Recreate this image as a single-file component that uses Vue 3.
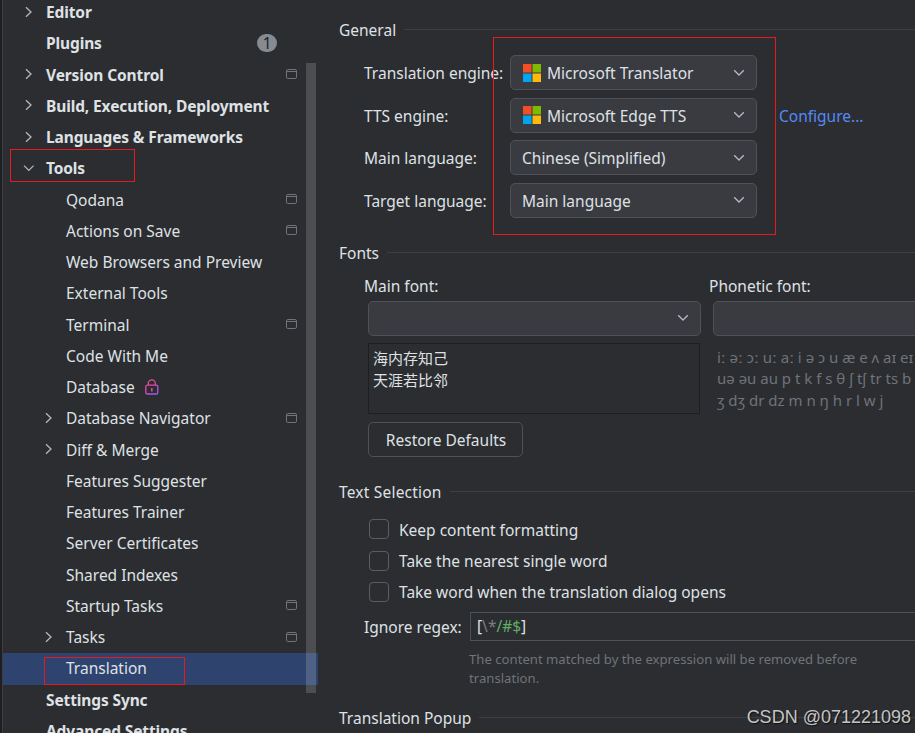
<script setup>
import { ref } from "vue";

const items = [
  { label: "Editor", top: true, arrow: "right" },
  { label: "Plugins", top: true, badge: 1 },
  { label: "Version Control", top: true, arrow: "right", project: true },
  { label: "Build, Execution, Deployment", top: true, arrow: "right" },
  { label: "Languages & Frameworks", top: true, arrow: "right" },
  { label: "Tools", top: true, arrow: "down" },
  { label: "Qodana", project: true },
  { label: "Actions on Save", project: true },
  { label: "Web Browsers and Preview" },
  { label: "External Tools" },
  { label: "Terminal", project: true },
  { label: "Code With Me" },
  { label: "Database", lock: true },
  { label: "Database Navigator", arrow: "right", project: true },
  { label: "Diff & Merge", arrow: "right" },
  { label: "Features Suggester" },
  { label: "Features Trainer" },
  { label: "Server Certificates" },
  { label: "Shared Indexes" },
  { label: "Startup Tasks", project: true },
  { label: "Tasks", arrow: "right", project: true },
  { label: "Translation" },
  { label: "Settings Sync", top: true },
  { label: "Advanced Settings", top: true },
];

const selected = ref("Translation");

const general = [
  { label: "Translation engine:", value: "Microsoft Translator", logo: true },
  { label: "TTS engine:", value: "Microsoft Edge TTS", logo: true, link: "Configure..." },
  { label: "Main language:", value: "Chinese (Simplified)" },
  { label: "Target language:", value: "Main language" },
];

const options = ref([
  { label: "Keep content formatting", checked: false },
  { label: "Take the nearest single word", checked: false },
  { label: "Take word when the translation dialog opens", checked: false },
]);
</script>

<template>
  <div class="settings">
    <aside class="sidebar">
      <div
        v-for="item in items"
        :key="item.label"
        class="row"
        :class="{ top: item.top, selected: item.label === selected }"
        @click="selected = item.label"
      >
        <span class="arrow">
          <svg v-if="item.arrow === 'right'" width="12" height="12" viewBox="0 0 12 12">
            <path d="M4 1.2 9 6l-5 4.8" />
          </svg>
          <svg v-if="item.arrow === 'down'" width="12" height="12" viewBox="0 0 12 12">
            <path d="M2 3.6 6.8 8.4l4.8-4.8" />
          </svg>
        </span>
        <span class="name">{{ item.label }}</span>
        <svg v-if="item.lock" class="lock" width="14" height="16" viewBox="0 0 14 16">
          <defs>
            <linearGradient id="lock" gradientUnits="userSpaceOnUse" x1="2" y1="1" x2="13" y2="15">
              <stop offset="0" stop-color="#e8506a" />
              <stop offset="0.5" stop-color="#d948c4" />
              <stop offset="1" stop-color="#8a63f5" />
            </linearGradient>
          </defs>
          <rect x="0.8" y="6.2" width="12" height="8.8" rx="1.6" />
          <path d="M3.3 6V4.4a3.5 3.5 0 0 1 7 0V6" />
          <path class="keyhole" d="M6.8 9v3.4" />
        </svg>
        <span v-if="item.badge" class="badge">{{ item.badge }}</span>
        <svg v-if="item.project" class="project" width="11" height="10" viewBox="0 0 11 10">
          <rect x="0.5" y="0.5" width="10" height="9" rx="1.4" />
          <path d="M1 2.5h9" />
        </svg>
      </div>
      <div class="scrollbar"></div>
      <div class="mark mark-tools"></div>
      <div class="mark mark-translation"></div>
    </aside>

    <main class="content">
      <h2 class="heading">General</h2>
      <div class="general">
        <div v-for="row in general" :key="row.label" class="field">
          <label>{{ row.label }}</label>
          <div class="combo">
            <svg v-if="row.logo" class="logo" width="18" height="18" viewBox="0 0 18 18">
              <path fill="#f25022" d="M0 0h8.5v8.5H0z" />
              <path fill="#7fba00" d="M9.5 0H18v8.5H9.5z" />
              <path fill="#00a4ef" d="M0 9.5h8.5V18H0z" />
              <path fill="#ffb90a" d="M9.5 9.5H18V18H9.5z" />
            </svg>
            <span>{{ row.value }}</span>
            <svg class="chevron" width="12" height="8" viewBox="0 0 12 8">
              <path d="M1.2 1.2 6 6l4.8-4.8" />
            </svg>
          </div>
          <a v-if="row.link" class="link">{{ row.link }}</a>
        </div>
        <div class="mark mark-general"></div>
      </div>

      <h2 class="heading fonts-heading">Fonts</h2>
      <div class="fonts">
        <div class="font-main">
          <label>Main font:</label>
          <div class="combo">
            <svg class="chevron" width="12" height="8" viewBox="0 0 12 8">
              <path d="M1.2 1.2 6 6l4.8-4.8" />
            </svg>
          </div>
          <div class="preview">海内存知己<br />天涯若比邻</div>
          <button class="restore">Restore Defaults</button>
        </div>
        <div class="font-phonetic">
          <label>Phonetic font:</label>
          <div class="combo"></div>
          <div class="phonetics">iː əː ɔː uː aː i ə ɔ u æ e ʌ aɪ eɪ<br />uə əu au p t k f s θ ʃ tʃ tr ts b<br />ʒ dʒ dr dz m n ŋ h r l w j</div>
        </div>
      </div>

      <h2 class="heading selection-heading">Text Selection</h2>
      <div class="options">
        <div v-for="option in options" :key="option.label" class="option" @click="option.checked = !option.checked">
          <span class="checkbox"></span>
          <span class="option-label">{{ option.label }}</span>
        </div>
      </div>
      <div class="regex">
        <label>Ignore regex:</label>
        <div class="input">[<span class="escape">\*</span><span class="chars">/#$</span>]</div>
      </div>
      <p class="hint">The content matched by the expression will be removed before<br />translation.</p>

      <h2 class="heading popup-heading">Translation Popup</h2>
    </main>
    <div class="watermark">CSDN @071221098</div>
  </div>
</template>

<style>
body {
  background: #2b2d30;
  overflow: hidden;
}
</style>

<style scoped>
.settings {
  position: relative;
  display: flex;
  width: 915px;
  height: 733px;
  overflow: hidden;
  box-sizing: border-box;
  background: #2b2d30;
  color: #dfe1e5;
  font-family: "Noto Sans", "Noto Sans CJK SC", sans-serif;
  font-size: 15.5px;
  line-height: 22px;
  white-space: nowrap;
}

.settings * {
  box-sizing: border-box;
}

.sidebar {
  position: relative;
  flex: none;
  width: 318px;
  height: 736px;
  margin-top: -3px;
  border-left: 2px solid #1e1f22;
  box-shadow: inset 1px 0 #3c3e42;
}

.row {
  display: flex;
  align-items: center;
  height: 31.25px;
  margin-left: 1px;
  padding: 0 21px 2px 39px;
}

.row.top {
  padding-left: 19px;
  font-weight: 700;
  letter-spacing: -0.12px;
}

.row.selected {
  background: #2e436e;
}

.name {
  padding-top: 1px;
}

.arrow {
  flex: none;
  display: flex;
  width: 24px;
}

.arrow path,
.chevron path {
  fill: none;
  stroke: #b4b8bf;
  stroke-width: 1.3;
}

.lock {
  margin-left: 10px;
}

.lock rect,
.lock path {
  fill: none;
  stroke: url(#lock);
  stroke-width: 1.3;
}

.lock .keyhole {
  stroke: #d9508f;
  stroke-width: 1.6;
}

.badge {
  width: 20px;
  height: 18px;
  margin-left: auto;
  margin-right: 20px;
  border-radius: 9px;
  background: #868a91;
  color: #1e1f22;
  font-weight: 400;
  line-height: 18px;
  text-align: center;
}

.project {
  margin-left: auto;
}

.project rect,
.project path {
  fill: none;
  stroke: #6f737a;
}

.scrollbar {
  position: absolute;
  top: 66px;
  right: 2px;
  width: 10px;
  height: 630px;
  background: rgba(255, 255, 255, 0.16);
}

.mark {
  position: absolute;
  border: 1px solid #e8191f;
}

.mark-tools {
  left: 8px;
  top: 152px;
  width: 125px;
  height: 33px;
}

.mark-translation {
  left: 42px;
  top: 660px;
  width: 141px;
  height: 28px;
}

.mark-general {
  left: 129px;
  top: -18px;
  width: 283px;
  height: 198px;
}

.content {
  flex: 1;
  min-width: 0;
  padding: 19px 0 0 21px;
}

.heading {
  display: flex;
  align-items: center;
  gap: 8px;
  margin: 0;
  font-size: inherit;
  font-weight: 400;
}

.heading::after {
  content: "";
  flex: 1;
  height: 1px;
  margin-bottom: 1px;
  background: #3c3e42;
}

.general {
  position: relative;
  display: flex;
  flex-direction: column;
  gap: 7.6px;
  margin: 14px 0 0 25px;
}

.field {
  display: flex;
  align-items: center;
}

.field label {
  flex: none;
  width: 146px;
  padding-top: 1px;
}

.combo {
  display: flex;
  align-items: center;
  width: 247px;
  height: 35px;
  padding: 0 11px 0 11px;
  border: 1px solid #4e5157;
  border-radius: 5px;
  background: #393b40;
}

.combo span,
.link {
  padding-top: 1px;
}

.logo {
  margin: 0 6px 0 1px;
}

.chevron {
  margin-left: auto;
}

.link {
  margin-left: 22px;
  color: #548af7;
}

.fonts-heading {
  margin-top: 24px;
}

.fonts {
  display: flex;
  margin: 11px 0 0 25px;
}

.font-main {
  flex: none;
  width: 345px;
}

.font-phonetic {
  flex: none;
}

.fonts label {
  display: block;
}

.fonts .combo {
  width: 333px;
  margin: 4px 0 0 4px;
}

.preview {
  width: 332px;
  height: 71px;
  margin: 7px 0 0 4px;
  padding: 3px 4px;
  border: 1px solid #1e1f22;
  font-size: 15px;
}

.restore {
  display: block;
  width: 155px;
  height: 35px;
  margin: 8px 0 0 4px;
  padding: 2px 0 0 1px;
  border: 1px solid #4e5157;
  border-radius: 5px;
  background: transparent;
  color: inherit;
  font: inherit;
}

.phonetics {
  margin: 11px 0 0 8px;
  color: #6f737a;
  font-size: 15px;
  line-height: 21.5px;
}

.selection-heading {
  margin-top: 24px;
  letter-spacing: 0.2px;
}

.options {
  margin: 11px 0 0 30px;
}

.option {
  display: flex;
  align-items: center;
  gap: 10px;
  height: 31.2px;
}

.option-label {
  padding-top: 1px;
}

.checkbox {
  width: 20px;
  height: 20px;
  border: 1px solid #5a5d63;
  border-radius: 4px;
}

.regex {
  display: flex;
  align-items: center;
  margin: 5px 0 0 25px;
}

.regex label {
  width: 106px;
}

.input {
  flex: 1;
  height: 29px;
  padding-left: 6px;
  border: 1px solid #4e5157;
  border-right: none;
  line-height: 27px;
}

.escape {
  color: #7a7e85;
}

.chars {
  color: #5fad65;
}

.hint {
  margin: 9px 0 0 130px;
  color: #6f737a;
  font-size: 13.15px;
  line-height: 19px;
}

.popup-heading {
  margin-top: 19px;
}

.watermark {
  position: absolute;
  right: 4px;
  bottom: 5px;
  color: #c4c5c7;
  font-family: "Liberation Sans", sans-serif;
  font-size: 18px;
  text-shadow: 1px 1px 1px #111;
}
</style>
